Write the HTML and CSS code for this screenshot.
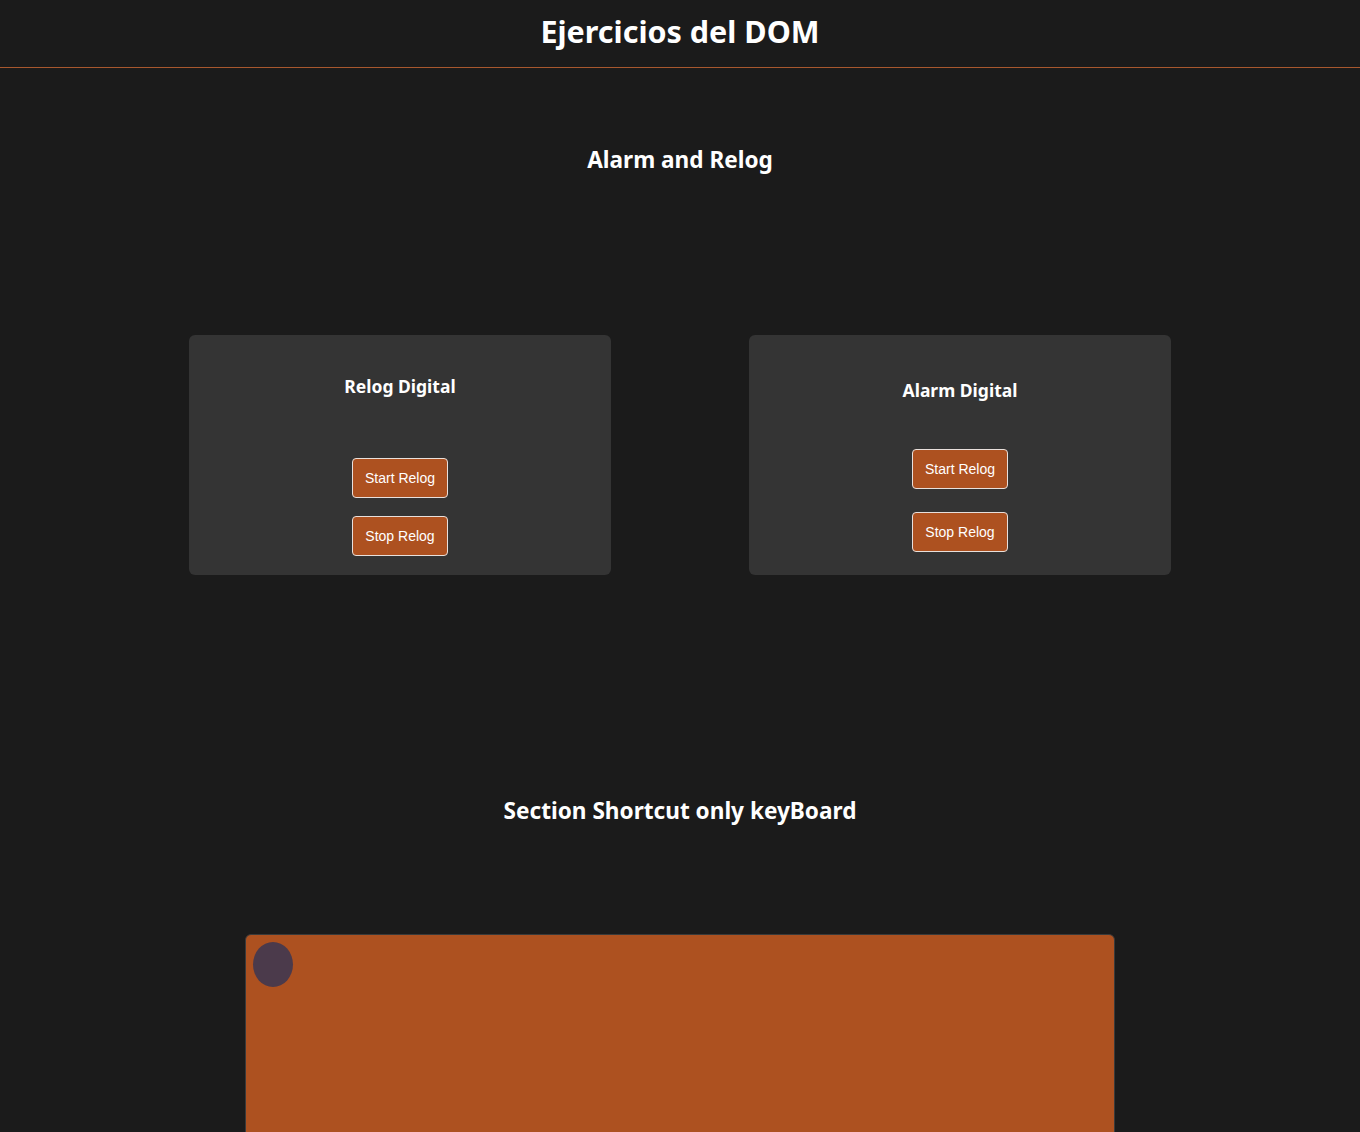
FILE: index.html
```html
<!DOCTYPE html>
<html lang="es">
<head>
<meta charset="utf-8">
<title>Ejercicios del DOM</title>
<link rel="stylesheet" href="styles.css">
</head>
<body>
<header class="top">
  <h1 class="top-title">Ejercicios del DOM</h1>
</header>
<main>
  <section class="section-clock">
    <h2 class="section-title">Alarm and Relog</h2>
    <div class="cards">
      <div class="card card-relog">
        <h3 class="card-title">Relog Digital</h3>
        <div class="clock"></div>
        <div class="btns btns-relog">
          <button class="btn">Start Relog</button>
          <button class="btn">Stop Relog</button>
        </div>
      </div>
      <div class="card card-alarm">
        <h3 class="card-title">Alarm Digital</h3>
        <div class="btns btns-alarm">
          <button class="btn">Start Relog</button>
          <button class="btn">Stop Relog</button>
        </div>
      </div>
    </div>
  </section>
  <section class="section-keys">
    <h2 class="section-title">Section Shortcut only keyBoard</h2>
    <div class="stage">
      <div class="ball"></div>
    </div>
  </section>
</main>
</body>
</html>
```
FILE: styles.css
```css
* { box-sizing: border-box; }
body {
  margin: 0;
  background: #1b1b1b;
  color: #fff;
  font-family: "Noto Sans", Roboto, sans-serif;
}
.top {
  height: 68px;
  border-bottom: 1px solid #a8582e;
}
.top-title {
  margin: 0;
  text-align: center;
  font-size: 30.5px;
  line-height: 63px;
  font-weight: 700;
}
.section-title {
  margin: 0;
  text-align: center;
  font-size: 22.6px;
  line-height: 30px;
  font-weight: 700;
}
.section-clock { padding-top: 77px; }
.cards {
  display: flex;
  justify-content: center;
  gap: 138px;
  margin-top: 160px;
}
.card {
  width: 422px;
  height: 240px;
  background: #343434;
  border-radius: 6px;
  display: flex;
  flex-direction: column;
  align-items: center;
}
.card-title {
  margin: 0;
  font-size: 17.5px;
  line-height: 24px;
  font-weight: 700;
}
.card-relog { padding-top: 39px; }
.card-alarm { padding-top: 43px; }
.clock { height: 60px; }
.btns {
  display: flex;
  flex-direction: column;
  align-items: center;
}
.btns-relog { gap: 18px; }
.btns-alarm { gap: 23px; margin-top: 47px; }
.btn {
  height: 40px;
  width: 96px;
  padding: 0 11px;
  background: #ad5120;
  color: #fff;
  border: 1px solid #e8e0dc;
  border-radius: 4px;
  font-family: "Liberation Sans", Arial, sans-serif;
  font-size: 14px;
}
.section-keys { padding-top: 221px; }
.stage {
  position: relative;
  width: 870px;
  height: 520px;
  margin: 108px auto 0;
  background: #ad5120;
  border: 1px solid #3a3a3a;
  border-radius: 6px;
}
.ball {
  position: absolute;
  left: 7px;
  top: 7px;
  width: 40px;
  height: 45px;
  border-radius: 50%;
  background: #4b3a4b;
}
```
